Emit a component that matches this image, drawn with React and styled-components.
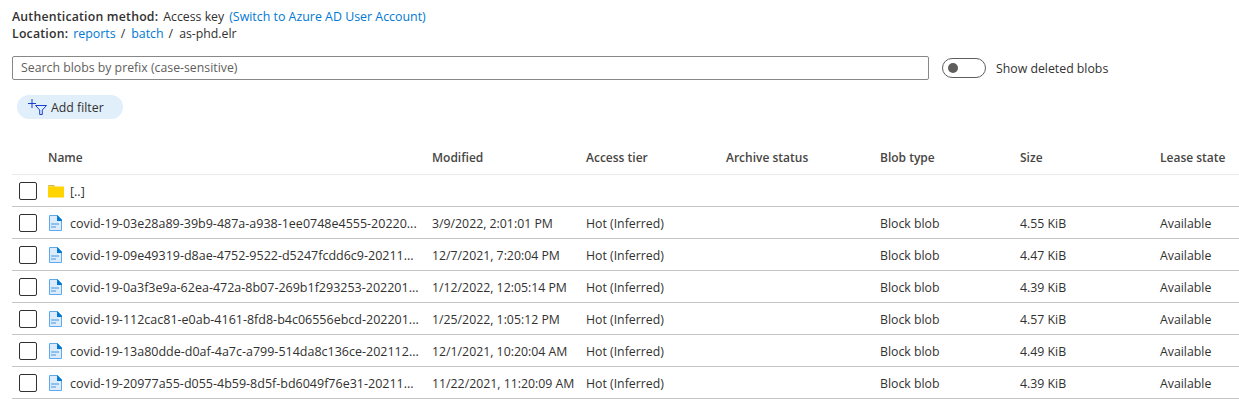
import styled, { createGlobalStyle } from "styled-components";

const GlobalStyle = createGlobalStyle`
  html, body {
    margin: 0;
    padding: 0;
    background: #fff;
    overflow: hidden;
  }
  body {
    font-family: "Open Sans", "Liberation Sans", sans-serif;
    font-size: 12.3px;
    color: #323130;
  }
`;

const Page = styled.div`
  width: 1239px;
  height: 403px;
  overflow: hidden;
  padding: 8px 0 0 12px;
  box-sizing: border-box;
`;

const InfoLine = styled.div`
  height: 17px;
  line-height: 17px;
  display: flex;
  align-items: center;
  gap: 5px;
  white-space: nowrap;
`;

const Label = styled.span`
  font-weight: 600;
  letter-spacing: 0.2px;
  color: #323130;
`;

const Link = styled.a`
  color: #0078d4;
  font-size: 12.4px;
`;

const Slash = styled.span`
  margin: 0 1px 0 0;
`;

const SearchRow = styled.div`
  display: flex;
  align-items: center;
  margin-top: 14px;
`;

const SearchBox = styled.div`
  width: 907px;
  height: 22px;
  line-height: 22px;
  border: 1px solid #8a8886;
  border-radius: 2px;
  padding: 0 0 0 8px;
  margin-right: 13px;
  color: #605e5c;
`;

const Toggle = styled.div`
  width: 37px;
  height: 18px;
  border: 1px solid #605e5c;
  border-radius: 10px;
  display: flex;
  align-items: center;
  padding-left: 5px;
  margin-right: 10px;
`;

const Knob = styled.div`
  width: 10px;
  height: 10px;
  border-radius: 50%;
  background: #605e5c;
`;

const Pill = styled.div`
  margin: 15px 0 0 5px;
  width: 106px;
  height: 24px;
  border-radius: 12px;
  background: #e1effa;
  display: flex;
  align-items: center;
  position: relative;
  padding-left: 34px;
  box-sizing: border-box;
`;

const PillIcon = styled.svg`
  position: absolute;
  left: 11px;
  top: 0;
`;

const Table = styled.div`
  margin-top: 16px;
  width: 1227px;
`;

const Row = styled.div`
  display: grid;
  grid-template-columns: 36px 384px 154px 140px 154px 140px 140px 79px;
  align-items: center;
  height: 31px;
  border-bottom: 1px solid #c8c6c4;
  white-space: nowrap;
`;

const HeaderRow = styled(Row)`
  padding-top: 5px;
  height: 34px;
  border-bottom-color: #edebe9;
`;

const HeadCell = styled.div`
  font-size: 12px;
  font-weight: 600;
  color: #484644;
`;

const Cell = styled.div`
  padding-top: 2px;
  color: #323130;
`;

const CheckCell = styled.div`
  display: flex;
  padding-left: 7px;
`;

const Check = styled.div`
  width: 16px;
  height: 16px;
  border: 1px solid #323130;
  border-radius: 2px;
`;

const NameCell = styled.div`
  display: flex;
  align-items: center;
  gap: 6px;
  min-width: 0;
`;

const NameText = styled.span`
  font-size: 12.5px;
  padding-top: 2px;
`;

const FilterIcon = () => (
  <PillIcon width="22" height="24" viewBox="0 0 22 24" fill="none" stroke="#1a3fd0" strokeWidth="1">
    <path d="M0 8.5h8M4 4v9" />
    <path d="M7.5 10.5h11l-4.2 4.5v4.5h-2.6V15z" />
  </PillIcon>
);

const FolderIcon = () => (
  <svg width="16" height="14" viewBox="0 0 16 14">
    <path d="M0 2a1 1 0 0 1 1-1h5l1.5 1.5H0z" fill="#dcb53f" />
    <rect x="0" y="2.5" width="16" height="11" fill="#ffd400" />
  </svg>
);

const FileIcon = () => (
  <svg width="16" height="16" viewBox="0 0 16 16">
    <path d="M1.5 0.5h8l4 4v11h-12z" fill="#dcecfc" stroke="#5ea9ec" />
    <path d="M9 0l5 5v1H9z" fill="#0078d4" />
    <path d="M3 8h8v2H3z" fill="#8fc1f0" />
    <path d="M3 11h5v2H3z" fill="#8fc1f0" />
  </svg>
);

const blobs = [
  ["covid-19-03e28a89-39b9-487a-a938-1ee0748e4555-20220...", "3/9/2022, 2:01:01 PM", "4.55 KiB"],
  ["covid-19-09e49319-d8ae-4752-9522-d5247fcdd6c9-20211...", "12/7/2021, 7:20:04 PM", "4.47 KiB"],
  ["covid-19-0a3f3e9a-62ea-472a-8b07-269b1f293253-202201...", "1/12/2022, 12:05:14 PM", "4.39 KiB"],
  ["covid-19-112cac81-e0ab-4161-8fd8-b4c06556ebcd-202201...", "1/25/2022, 1:05:12 PM", "4.57 KiB"],
  ["covid-19-13a80dde-d0af-4a7c-a799-514da8c136ce-202112...", "12/1/2021, 10:20:04 AM", "4.49 KiB"],
  ["covid-19-20977a55-d055-4b59-8d5f-bd6049f76e31-20211...", "11/22/2021, 11:20:09 AM", "4.39 KiB"],
];

const App = () => {
  return (
    <Page>
      <GlobalStyle />
      <InfoLine>
        <Label>Authentication method:</Label>
        <span>Access key</span>
        <Link>(Switch to Azure AD User Account)</Link>
      </InfoLine>
      <InfoLine>
        <Label>Location:</Label>
        <Link>reports</Link>
        <Slash>/</Slash>
        <Link>batch</Link>
        <Slash>/</Slash>
        <span>as-phd.elr</span>
      </InfoLine>
      <SearchRow>
        <SearchBox>Search blobs by prefix (case-sensitive)</SearchBox>
        <Toggle>
          <Knob />
        </Toggle>
        <span>Show deleted blobs</span>
      </SearchRow>
      <Pill>
        <FilterIcon />
        Add filter
      </Pill>
      <Table>
        <HeaderRow>
          <div />
          <HeadCell>Name</HeadCell>
          <HeadCell>Modified</HeadCell>
          <HeadCell>Access tier</HeadCell>
          <HeadCell>Archive status</HeadCell>
          <HeadCell>Blob type</HeadCell>
          <HeadCell>Size</HeadCell>
          <HeadCell>Lease state</HeadCell>
        </HeaderRow>
        <Row>
          <CheckCell>
            <Check />
          </CheckCell>
          <NameCell>
            <FolderIcon />
            <NameText>[..]</NameText>
          </NameCell>
        </Row>
        {blobs.map((b) => (
          <Row key={b[0]}>
            <CheckCell>
              <Check />
            </CheckCell>
            <NameCell>
              <FileIcon />
              <NameText>{b[0]}</NameText>
            </NameCell>
            <Cell>{b[1]}</Cell>
            <Cell>Hot (Inferred)</Cell>
            <Cell />
            <Cell>Block blob</Cell>
            <Cell>{b[2]}</Cell>
            <Cell>Available</Cell>
          </Row>
        ))}
      </Table>
    </Page>
  );
};

export default App;
